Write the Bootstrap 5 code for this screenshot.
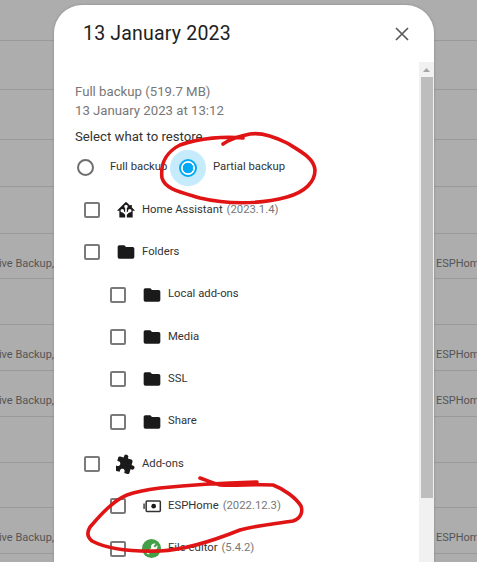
<!DOCTYPE html>
<html lang="en">
<head>
<meta charset="utf-8">
<link href="https://cdn.jsdelivr.net/npm/bootstrap@5.3.0/dist/css/bootstrap.min.css" rel="stylesheet">
<style>
html,body{height:562px;overflow:hidden;background:#adadad;font-family:Roboto,"Liberation Sans",sans-serif;}
.bg-rows{color:#555;font-size:11px;}
.bg-row{border-bottom:1px solid #999;height:46px;display:grid;grid-template-columns:54px 380px 43px;align-items:center;width:477px;}
.bg-row .lft{display:flex;justify-content:flex-end;white-space:nowrap;padding-top:16px;}
.bg-row .rgt{padding:16px 0 0 2px;white-space:nowrap;}
.h41{height:41px}.h49{height:49px}.h50{height:50px}.h47{height:47px}.h45{height:45px}
.dlg{position:absolute;left:54px;top:5px;width:380px;height:557px;overflow:hidden;background:#fff;border-radius:28px 28px 0 0;box-shadow:0 0 3px rgba(0,0,0,.2);}
.dlg-head{height:57px;padding:0 25px 0 29px;}
.dlg-title{font-size:19.5px;letter-spacing:.2px;color:#212121;margin:0;font-weight:400;line-height:1;}
.x-btn{background:none;border:0;padding:0;line-height:0;}
.dlg-body{padding:0 0 0 21px;overflow:hidden;height:500px;}
.scr{width:15px;background:#f1f1f1;flex:none;height:500px;}
.scr-up{height:15px;}
.scr-thumb{height:421px;background:#bdbdbd;margin:0 1px 0 2px;}
.meta{color:#777;font-size:13.2px;line-height:19px;padding-top:20px;}
.sel{color:#333;font-size:13.2px;line-height:19px;margin-top:7px;}
.radios{height:43px;font-size:11.3px;color:#333;}
.rad{appearance:none;width:18px;height:18px;border:2px solid #6f6f6f;border-radius:50%;margin:0;background:#fff;flex:none;}
.rad:checked{border-color:#03a9f4;background:radial-gradient(circle,#03a9f4 0 5px,#fff 5.6px);}
.halo{width:36px;height:36px;border-radius:50%;background:#c5ebfd;flex:none;}
.rad-a{margin-left:2px;margin-right:16px;width:17px;height:17px;}
.rad-lab-a{width:60px;white-space:nowrap;}
.rad-lab-b{margin-left:7px;}
.item{height:42.33px;font-size:11.3px;color:#333;padding-left:9px;white-space:nowrap;}
.item.sub{padding-left:35px;}
.cb{appearance:none;width:16px;height:16px;border:2px solid #7a7a7a;border-radius:2px;margin:0 16px 0 0;flex:none;background:#fff;}
.ico{width:20px;height:20px;flex:none;margin-right:6px;fill:#1a1a1a;}
.chip{fill:none;stroke:#333;stroke-width:1.800;}
.chip-dot{fill:#1a1a1a;}
.chip-tab{fill:#555;}
.ver{color:#777;margin-left:4px;}
.logo-file{width:19px;height:19px;border-radius:50%;background:#43a047;flex:none;margin:0 7px 0 0;}
.ink{position:absolute;left:0;top:0;width:477px;height:562px;pointer-events:none;}
.ink path{fill:none;stroke:#e01414;stroke-width:3.600;stroke-linecap:round;stroke-linejoin:round;}
</style>
</head>
<body>
<div class="bg-rows">
  <div class="bg-row h41"></div>
  <div class="bg-row h49"></div>
  <div class="bg-row h50"></div>
  <div class="bg-row h47"></div>
  <div class="bg-row h47"></div>
  <div class="bg-row h45"><div class="lft">ive Backup,</div><div></div><div class="rgt">ESPHom</div></div>
  <div class="bg-row"></div>
  <div class="bg-row"><div class="lft">ive Backup,</div><div></div><div class="rgt">ESPHom</div></div>
  <div class="bg-row"><div class="lft">ive Backup,</div><div></div><div class="rgt">ESPHom</div></div>
  <div class="bg-row"></div>
  <div class="bg-row h45"></div>
  <div class="bg-row"><div class="lft">ive Backup,</div><div></div><div class="rgt">ESPHom</div></div>
</div>

<div class="dlg">
  <div class="dlg-head d-flex align-items-center justify-content-between">
    <h2 class="dlg-title">13 January 2023</h2>
    <button class="x-btn" type="button" aria-label="Close"><svg width="14" height="14" viewBox="0 0 14 14"><path d="M1 1L13 13M13 1L1 13" stroke="#5a5a5a" stroke-width="1.7" fill="none"/></svg></button>
  </div>
  <div class="d-flex">
    <div class="dlg-body flex-grow-1">
      <div class="meta">Full backup (519.7 MB)<br>13 January 2023 at 13:12</div>
      <div class="sel">Select what to restore</div>
      <div class="radios d-flex align-items-center">
        <input class="rad rad-a" type="radio" name="m">
        <span class="rad-lab-a">Full backup</span>
        <span class="halo d-flex align-items-center justify-content-center"><input class="rad" type="radio" name="m" checked></span>
        <span class="rad-lab-b">Partial backup</span>
      </div>
      <div class="item d-flex align-items-center"><input class="cb" type="checkbox">
        <svg class="ico" viewBox="0 0 24 24"><path d="M21.8,13H20V21H13V17.67L15.79,14.88L16.5,15C17.66,15 18.6,14.06 18.6,12.9C18.6,11.74 17.66,10.8 16.5,10.8A2.1,2.1 0 0,0 14.4,12.9L14.5,13.61L13,15.13V9.65C13.66,9.29 14.1,8.6 14.1,7.8A2.1,2.1 0 0,0 12,5.7A2.1,2.1 0 0,0 9.9,7.8C9.9,8.6 10.34,9.29 11,9.65V15.13L9.5,13.61L9.6,12.9A2.1,2.1 0 0,0 7.5,10.8A2.1,2.1 0 0,0 5.4,12.9A2.1,2.1 0 0,0 7.5,15L8.21,14.88L11,17.67V21H4V13H2.25C1.83,13 1.42,13 1.42,12.79C1.43,12.58 1.85,12.15 2.28,11.72L11,3C11.33,2.67 11.67,2.33 12,2.33C12.33,2.33 12.67,2.67 13,3L17,7V6H19V9L21.78,11.78C22.18,12.18 22.59,12.59 22.6,12.8C22.6,13 22.2,13 21.8,13Z"/></svg>
        <span>Home Assistant<span class="ver">(2023.1.4)</span></span></div>
      <div class="item d-flex align-items-center"><input class="cb" type="checkbox">
        <svg class="ico" viewBox="0 0 24 24"><path d="M10,4H4C2.89,4 2,4.89 2,6V18A2,2 0 0,0 4,20H20A2,2 0 0,0 22,18V8C22,6.89 21.1,6 20,6H12L10,4Z"/></svg>
        <span>Folders</span></div>
      <div class="item sub d-flex align-items-center"><input class="cb" type="checkbox">
        <svg class="ico" viewBox="0 0 24 24"><path d="M10,4H4C2.89,4 2,4.89 2,6V18A2,2 0 0,0 4,20H20A2,2 0 0,0 22,18V8C22,6.89 21.1,6 20,6H12L10,4Z"/></svg>
        <span>Local add-ons</span></div>
      <div class="item sub d-flex align-items-center"><input class="cb" type="checkbox">
        <svg class="ico" viewBox="0 0 24 24"><path d="M10,4H4C2.89,4 2,4.89 2,6V18A2,2 0 0,0 4,20H20A2,2 0 0,0 22,18V8C22,6.89 21.1,6 20,6H12L10,4Z"/></svg>
        <span>Media</span></div>
      <div class="item sub d-flex align-items-center"><input class="cb" type="checkbox">
        <svg class="ico" viewBox="0 0 24 24"><path d="M10,4H4C2.89,4 2,4.89 2,6V18A2,2 0 0,0 4,20H20A2,2 0 0,0 22,18V8C22,6.89 21.1,6 20,6H12L10,4Z"/></svg>
        <span>SSL</span></div>
      <div class="item sub d-flex align-items-center"><input class="cb" type="checkbox">
        <svg class="ico" viewBox="0 0 24 24"><path d="M10,4H4C2.89,4 2,4.89 2,6V18A2,2 0 0,0 4,20H20A2,2 0 0,0 22,18V8C22,6.89 21.1,6 20,6H12L10,4Z"/></svg>
        <span>Share</span></div>
      <div class="item d-flex align-items-center"><input class="cb" type="checkbox">
        <svg class="ico" viewBox="0 0 24 24"><path d="M20.5,11H19V7C19,5.89 18.1,5 17,5H13V3.5A2.5,2.5 0 0,0 10.5,1A2.5,2.5 0 0,0 8,3.5V5H4A2,2 0 0,0 2,7V10.8H3.5C5,10.8 6.2,12 6.2,13.5C6.2,15 5,16.2 3.5,16.2H2V20A2,2 0 0,0 4,22H7.8V20.5C7.8,19 9,17.8 10.5,17.8C12,17.8 13.2,19 13.2,20.5V22H17A2,2 0 0,0 19,20V16H20.5A2.5,2.5 0 0,0 23,13.5A2.5,2.5 0 0,0 20.500,11Z" transform="rotate(15 12 12) translate(12 12) scale(1.050) translate(-12.500 -11.500)"/></svg>
        <span>Add-ons</span></div>
      <div class="item sub d-flex align-items-center"><input class="cb" type="checkbox">
        <svg class="ico" viewBox="0 0 24 24"><rect class="chip" x="5" y="6" width="17" height="12.500" rx="1"/><circle class="chip-dot" cx="14" cy="12.200" r="2.800"/><rect class="chip-tab" x="1.500" y="9" width="2" height="6.500"/></svg>
        <span>ESPHome<span class="ver">(2022.12.3)</span></span></div>
      <div class="item sub d-flex align-items-center"><input class="cb" type="checkbox">
        <span class="logo-file d-flex align-items-center justify-content-center"><svg width="12" height="12" viewBox="0 0 24 24"><path fill="#fff" d="M22.7,19L13.6,9.900C14.500,7.600 14,4.900 12.100,3C10.100,1 7.100,.6 4.700,1.700L9,6L6,9L1.600,4.700C.4,7.100 .9,10.100 2.900,12.100C4.800,14 7.500,14.500 9.800,13.600L18.900,22.700C19.300,23.100 19.900,23.100 20.300,22.700L22.600,20.400C23.100,20 23.100,19.300 22.700,19Z" transform="matrix(-1 0 0 1 24 0)"/></svg></span>
        <span>File editor<span class="ver">(5.4.2)</span></span></div>
    </div>
    <div class="scr">
      <div class="scr-up d-flex align-items-center justify-content-center"><svg width="9" height="6" viewBox="0 0 9 6"><path d="M4.500 1L8 5H1z" fill="#a5a5a5"/></svg></div>
      <div class="scr-thumb"></div>
    </div>
  </div>
</div>

<svg class="ink" viewBox="0 0 477 562" aria-hidden="true">
  <path d="M243 138C225 136 200 138 180 145C168 151 160 162 162 178C165 189 180 192 200 198C225 204 258 205 287 197C305 192 315 182 315 170C314 158 300 151 287 143C275 137 262 132 250 134C240 136 230 139 223 144"/>
  <path d="M257 482C225 483 190 485 160 488C145 490 135 492 127 495C112 501 98 518 90 527C87 532 87 537 92 541C105 548 125 552 160 551C185 550 215 540 240 530C258 525 275 524 293 521C301 518 303 512 301 506C296 498 284 489 273 485C255 484 235 486 220 485C212 483 206 480 200 478"/>
</svg>
</body>
</html>
